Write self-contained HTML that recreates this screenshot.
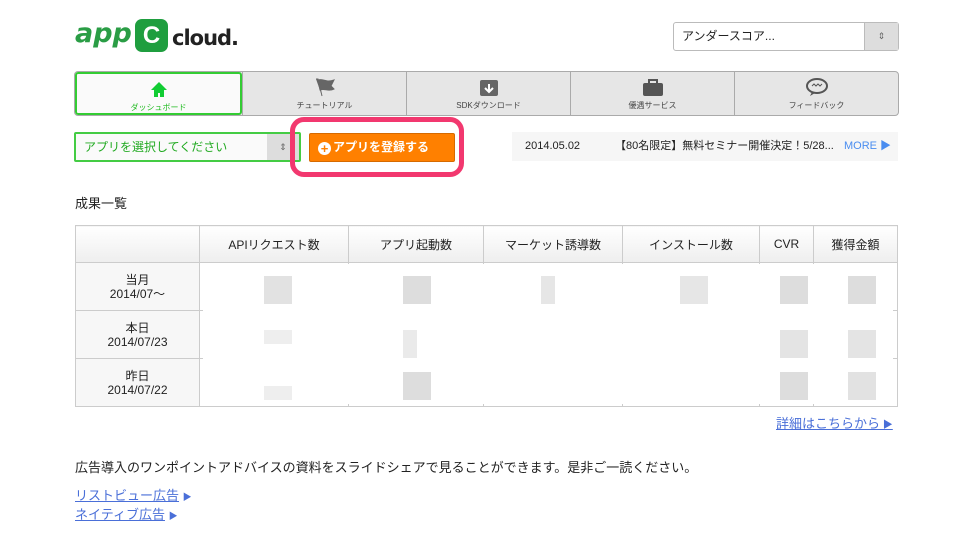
<!DOCTYPE html><html><head><meta charset="utf-8"><style>
body{margin:0;width:960px;height:536px;background:#fff;font-family:"Liberation Sans","Noto Sans CJK JP",sans-serif;color:#222;position:relative;overflow:hidden}
.a{position:absolute}
.nav{left:74px;top:71px;width:823px;height:43px;border:1px solid #aaa;border-radius:4px;background:#e6e6e6;display:flex;overflow:hidden}
.nav div{flex:1;border-left:1px solid #aaa;font-size:8px;color:#444;text-align:center;position:relative}
.nav div:first-child{border:2px solid #3c3;background:#fafafa;color:#2b2;border-radius:3px}
.nav span{position:absolute;left:0;right:0;top:28px}
table{border-collapse:collapse;font-size:12px;table-layout:fixed}
td,th{border:1px solid #ccc;font-weight:normal;text-align:center;padding:0}
th{background:linear-gradient(#fff,#eee);height:36px}
td{height:47px}
td.h{background:#f7f7f7;line-height:14px}
.g{position:absolute;background:#ddd}
</style></head><body>
<div class="a" style="left:75px;top:18px;font-size:27px;color:#2a9d45;font-style:italic;font-weight:bold;font-family:'DejaVu Sans',sans-serif">app</div>
<div class="a" style="left:135px;top:19px;width:33px;height:33px;background:#1f9e3f;border-radius:7px;color:#fff;font-size:24px;font-weight:bold;text-align:center;line-height:33px">C</div>
<div class="a" style="left:172px;top:26px;font-size:21px;font-weight:bold;color:#222;font-family:'DejaVu Sans',sans-serif;letter-spacing:-1px">cloud.</div>
<div class="a" style="left:673px;top:22px;width:224px;height:27px;border:1px solid #bbb;border-radius:3px;background:#fff;font-size:12px;line-height:27px"><span style="padding-left:8px">アンダースコア...</span><div class="a" style="right:0;top:0;width:33px;height:27px;background:#ddd;border-left:1px solid #bbb;text-align:center;font-size:9px;color:#666;line-height:27px">⇕</div></div>
<div class="a nav">
<div><svg class="a" style="left:73px;top:7px" width="18" height="17"><path d="M9 1L1 9h3v7h4v-4h2v4h4V9h3z" fill="#1c3"/></svg><span>ダッシュボード</span></div>
<div><svg class="a" style="left:70px;top:5px" width="24" height="20"><path d="M3 2l2 0 4 17M5 3c5-2 7 3 16 0l-3 6 3 3c-6 3-9-1-14 1z" fill="#666" stroke="#666"/></svg><span>チュートリアル</span></div>
<div><svg class="a" style="left:72px;top:7px" width="20" height="18"><rect x="1" y="1" width="18" height="16" rx="2" fill="#666"/><path d="M10 5v7M6 9l4 4 4-4" stroke="#fff" stroke-width="2" fill="none"/></svg><span>SDKダウンロード</span></div>
<div><svg class="a" style="left:71px;top:7px" width="22" height="18"><rect x="1" y="4" width="20" height="13" rx="2" fill="#555"/><rect x="7" y="1" width="8" height="4" fill="none" stroke="#555" stroke-width="2"/></svg><span>優遇サービス</span></div>
<div><svg class="a" style="left:70px;top:5px" width="24" height="20"><ellipse cx="12" cy="9" rx="10" ry="7" fill="none" stroke="#555" stroke-width="2"/><path d="M7 15l-2 4 5-3" fill="#555"/><path d="M7 9l2-2 2 2 2-2 2 2 2-2" stroke="#555" fill="none"/></svg><span>フィードバック</span></div>
</div>
<div class="a" style="left:74px;top:132px;width:223px;height:26px;border:2px solid #4c4;border-radius:2px;background:#fafafa;font-size:12px;color:#2a2;line-height:26px"><span style="padding-left:8px">アプリを選択してください</span><div class="a" style="right:0;top:0;width:32px;height:26px;background:#ddd;text-align:center;color:#666;font-size:9px">⇕</div></div>
<div class="a" style="left:290px;top:117px;width:174px;height:60px;border:5px solid #f2386f;border-radius:14px;box-sizing:border-box"></div>
<div class="a" style="left:309px;top:133px;width:144px;height:27px;background:#ff8000;border:1px solid #d66a00;border-radius:2px;color:#fff;font-size:12px;font-weight:bold;line-height:26px"><span style="display:inline-block;width:13px;height:13px;border-radius:50%;background:#fff;color:#ff8000;text-align:center;line-height:13px;margin:0 2px 0 8px;font-size:13px;vertical-align:-2px">+</span>アプリを登録する</div>
<div class="a" style="left:512px;top:132px;width:386px;height:29px;background:#f6f6f6;font-size:11px;line-height:29px"><span class="a" style="left:13px">2014.05.02</span><span class="a" style="left:103px">【80名限定】無料セミナー開催決定！5/28...</span><span class="a" style="left:332px;color:#4a8df0">MORE ▶</span></div>
<div class="a" style="left:75px;top:193px;font-size:13px">成果一覧</div>
<table class="a" style="left:75px;top:225px;width:823px">
<tr><th style="width:123px"></th><th style="width:148px">APIリクエスト数</th><th style="width:134px">アプリ起動数</th><th style="width:138px">マーケット誘導数</th><th style="width:136px">インストール数</th><th style="width:53px">CVR</th><th>獲得金額</th></tr>
<tr><td class="h">当月<br>2014/07〜</td><td></td><td></td><td></td><td></td><td></td><td></td></tr>
<tr><td class="h">本日<br>2014/07/23</td><td></td><td></td><td></td><td></td><td></td><td></td></tr>
<tr><td class="h">昨日<br>2014/07/22</td><td></td><td></td><td></td><td></td><td></td><td></td></tr>
</table>
<div class="a" style="left:203px;top:264px;width:690px;height:140px;background:#fff"></div>
<div class="g" style="left:264px;top:276px;width:28px;height:28px;background:#e2e2e2"></div>
<div class="g" style="left:403px;top:276px;width:28px;height:28px"></div>
<div class="g" style="left:541px;top:276px;width:14px;height:28px;background:#e6e6e6"></div>
<div class="g" style="left:680px;top:276px;width:28px;height:28px;background:#e6e6e6"></div>
<div class="g" style="left:780px;top:276px;width:28px;height:28px"></div>
<div class="g" style="left:848px;top:276px;width:28px;height:28px"></div>
<div class="g" style="left:264px;top:330px;width:28px;height:14px;background:#eee"></div>
<div class="g" style="left:403px;top:330px;width:14px;height:28px;background:#eaeaea"></div>
<div class="g" style="left:780px;top:330px;width:28px;height:28px;background:#e4e4e4"></div>
<div class="g" style="left:848px;top:330px;width:28px;height:28px;background:#e4e4e4"></div>
<div class="g" style="left:403px;top:372px;width:28px;height:28px"></div>
<div class="g" style="left:264px;top:386px;width:28px;height:14px;background:#eee"></div>
<div class="g" style="left:780px;top:372px;width:28px;height:28px"></div>
<div class="g" style="left:848px;top:372px;width:28px;height:28px;background:#e2e2e2"></div>
<div class="a" style="left:776px;top:413px;font-size:13px;color:#4a6fd8;text-decoration:underline">詳細はこちらから<span style="text-decoration:none;font-size:10px"> ▶</span></div>
<div class="a" style="left:75px;top:457px;font-size:13px">広告導入のワンポイントアドバイスの資料をスライドシェアで見ることができます。是非ご一読ください。</div>
<div class="a" style="left:75px;top:487px;font-size:13px;color:#4a6fd8;line-height:17px"><u>リストビュー広告</u> <span style="font-size:9px">▶</span><br><u>ネイティブ広告</u> <span style="font-size:9px">▶</span></div>
</body></html>
